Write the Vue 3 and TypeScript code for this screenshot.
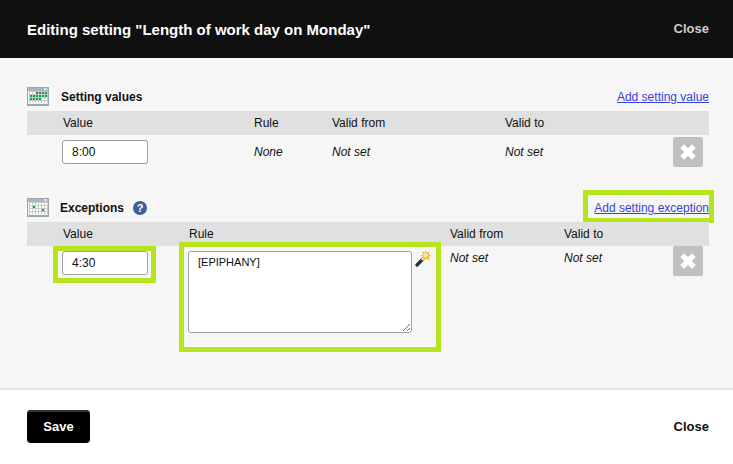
<template>
  <div class="dialog">
    <header class="topbar">
      <h1>Editing setting "Length of work day on Monday"</h1>
      <a class="top-close">Close</a>
    </header>

    <main class="body">
      <section class="block first">
        <div class="block-head">
          <svg class="cal" width="22" height="19" viewBox="0 0 22 19">
            <rect width="22" height="19" fill="#9aa8b0" />
            <rect x="1" y="1" width="20" height="3" fill="#a9b6bd" />
            <rect x="17" y="1" width="3" height="2" fill="#dfe5e8" />
            <rect x="1" y="4" width="20" height="13" fill="#f2f2f2" />
            <rect x="2" y="4" width="19" height="12" fill="#c9c9c9" />
            <rect v-for="c in cells" :key="c.k" :x="c.x" :y="c.y" width="2" height="2" :fill="fullGreen.includes(c.k) ? '#0da44f' : '#fff'" />
          </svg>
          <h2>Setting values</h2>
          <a class="add">Add setting value</a>
        </div>
        <div class="thead values-grid">
          <div class="pad">Value</div>
          <div>Rule</div>
          <div>Valid from</div>
          <div>Valid to</div>
        </div>
        <div class="values-grid row">
          <div class="pad"><input class="val" value="8:00" /></div>
          <div class="it">None</div>
          <div class="it">Not set</div>
          <div class="it">Not set</div>
          <button class="del">
            <svg width="18" height="18" viewBox="0 0 18 18"><path d="M3.2 3.2 L14.8 14.8 M14.8 3.2 L3.2 14.8" stroke="#fff" stroke-width="5.4" /></svg>
          </button>
        </div>
      </section>

      <section class="block second">
        <div class="block-head">
          <svg class="cal tight" width="22" height="19" viewBox="0 0 22 19">
            <rect width="22" height="19" fill="#9aa8b0" />
            <rect x="1" y="1" width="20" height="3" fill="#a9b6bd" />
            <rect x="17" y="1" width="3" height="2" fill="#dfe5e8" />
            <rect x="1" y="4" width="20" height="13" fill="#f2f2f2" />
            <rect x="2" y="4" width="19" height="12" fill="#c9c9c9" />
            <rect v-for="c in cells" :key="c.k" :x="c.x" :y="c.y" width="2" height="2" :fill="fewGreen.includes(c.k) ? '#0da44f' : '#fff'" />
          </svg>
          <h2>Exceptions</h2>
          <span class="help">?</span>
          <a class="add hl-link">Add setting exception</a>
        </div>
        <div class="thead except-grid">
          <div class="pad">Value</div>
          <div>Rule</div>
          <div>Valid from</div>
          <div>Valid to</div>
        </div>
        <div class="except-grid row-ex">
          <div class="mark-cell">
            <div class="mark"><input class="val" value="4:30" /></div>
          </div>
          <div class="rule-box">
            <textarea class="rule">[EPIPHANY]</textarea>
            <svg class="wand" width="16" height="17" viewBox="0 0 16 17">
              <path d="M2 15 L8 9" stroke="#2f2f2f" stroke-width="3.2" stroke-linecap="round" />
              <path d="M7 10 L9.5 7.5" stroke="#d8d8d8" stroke-width="3" />
              <path d="M10.5 0 L11.5 3 L14.5 1 L13.5 4.5 L16 5.5 L13.5 7 L14.5 10 L11 8.5 L9 10.5 L8.5 7 L5.5 6 L8 4.5 L7 1 L9.5 3 Z" fill="#f0b428" />
              <circle cx="10.5" cy="5.5" r="2.4" fill="#ffe680" />
            </svg>
          </div>
          <div class="it ex-text">Not set</div>
          <div class="it ex-text">Not set</div>
          <button class="del ex-del">
            <svg width="18" height="18" viewBox="0 0 18 18"><path d="M3.2 3.2 L14.8 14.8 M14.8 3.2 L3.2 14.8" stroke="#fff" stroke-width="5.4" /></svg>
          </button>
        </div>
      </section>
    </main>

    <footer class="bottom">
      <button class="save">Save</button>
      <a class="bottom-close">Close</a>
    </footer>
  </div>
</template>

<script setup lang="ts">
const cells: { k: string; x: number; y: number }[] = []
for (let r = 0; r < 4; r++) {
  for (let c = 0; c < 6; c++) {
    cells.push({ k: `${r}-${c}`, x: 3 + c * 3, y: 5 + r * 3 })
  }
}

const fullGreen = ['0-2', '0-3', '0-4', '0-5', '1-0', '1-1', '1-2', '1-3', '1-4', '1-5', '2-0', '2-1', '2-2', '2-3']
const fewGreen = ['1-1', '2-4']
</script>

<style>
html, body {
  margin: 0;
  background: #fff;
}
</style>

<style scoped>
.dialog {
  width: 733px;
  height: 464px;
  display: flex;
  flex-direction: column;
  font-family: "Liberation Sans", Arial, sans-serif;
  font-size: 12px;
  color: #111;
}

.topbar {
  height: 58px;
  background: #101010;
  display: flex;
  align-items: center;
  justify-content: space-between;
  padding: 0 24px 0 27px;
  flex-shrink: 0;
}

.topbar h1 {
  margin: 0;
  font-size: 15px;
  font-weight: 700;
  color: #fff;
}

.top-close {
  font-size: 13px;
  font-weight: 700;
  color: #ccc;
  margin-bottom: 1px;
}

.body {
  flex: 1;
  background: #f6f6f6;
  border-bottom: 2px solid #e4e4e4;
  padding: 0 24px 0 27px;
}

.block.first {
  padding-top: 29px;
}

.block.second {
  padding-top: 28px;
}

.block-head {
  display: flex;
  align-items: center;
  height: 20px;
  margin-bottom: 4px;
}

.cal {
  flex-shrink: 0;
  margin-right: 12px;
  align-self: flex-start;
}

.cal.tight {
  margin-right: 11px;
}

.block-head h2 {
  margin: 0;
  font-size: 12px;
  font-weight: 700;
}

.help {
  width: 14px;
  height: 14px;
  margin-left: 9px;
  border-radius: 50%;
  background: #3d5f9e;
  color: #fff;
  font-size: 11px;
  font-weight: 700;
  line-height: 14px;
  text-align: center;
}

.add {
  margin-left: auto;
  color: #3344dd;
  text-decoration: underline;
}

.hl-link {
  position: relative;
  align-self: flex-start;
  margin: -8px -5px 0 auto;
  border: 5px solid #b5e61d;
  padding: 6px 0 3px 6px;
  line-height: 14px;
}

.thead {
  height: 24px;
  align-items: center;
  background: #e0e0e0;
}

.values-grid {
  display: grid;
  grid-template-columns: 227px 78px 173px 1fr;
  position: relative;
}

.except-grid {
  display: grid;
  grid-template-columns: 162px 261px 114px 1fr;
  position: relative;
}

.pad {
  padding-left: 36px;
}

.row {
  height: 35px;
  padding-top: 5px;
  box-sizing: border-box;
  line-height: 24px;
}

.row .pad {
  padding-left: 35px;
}

.row-ex {
  align-items: start;
  height: 112px;
}

.it {
  font-style: italic;
}

.ex-text {
  padding-top: 5px;
}

.val {
  box-sizing: border-box;
  width: 86px;
  height: 24px;
  border: 1px solid #a0a0a0;
  border-radius: 3px;
  padding: 0 9px;
  font: 12px "Liberation Sans", Arial, sans-serif;
  color: #111;
  background: #fff;
  display: block;
}

.mark-cell {
  padding-left: 26px;
}

.mark {
  width: max-content;
  border: 5px solid #b5e61d;
  padding: 0 3px 3px 4px;
}

.rule-box {
  display: flex;
  align-items: flex-start;
  width: max-content;
  gap: 3px;
  margin: -4px 0 0 -10px;
  border: 5px solid #b5e61d;
  padding: 4px 5px 14px 4px;
}

.rule {
  box-sizing: border-box;
  width: 224px;
  height: 82px;
  margin: 0;
  border: 1px solid #a0a0a0;
  border-radius: 3px;
  padding: 4px 9px;
  font: 11px "Liberation Sans", Arial, sans-serif;
  color: #111;
  background: #fff;
  display: block;
}

.wand {
  margin-top: -1px;
}

.del {
  position: absolute;
  right: 6px;
  top: 2px;
  width: 30px;
  height: 30px;
  border: 0;
  border-radius: 2px;
  background: #c0c0c0;
  padding: 6px;
  display: flex;
}

.ex-del {
  top: 0;
}

.bottom {
  height: 74px;
  box-sizing: border-box;
  display: flex;
  align-items: center;
  justify-content: space-between;
  padding: 0 24px 1px 27px;
  flex-shrink: 0;
}

.save {
  width: 63px;
  height: 33px;
  border: 0;
  border-radius: 4px;
  background: #000;
  box-shadow: inset 0 2px 0 #333;
  color: #fff;
  font: 700 13px "Liberation Sans", Arial, sans-serif;
}

.bottom-close {
  font-size: 13px;
  font-weight: 700;
  color: #111;
}
</style>
